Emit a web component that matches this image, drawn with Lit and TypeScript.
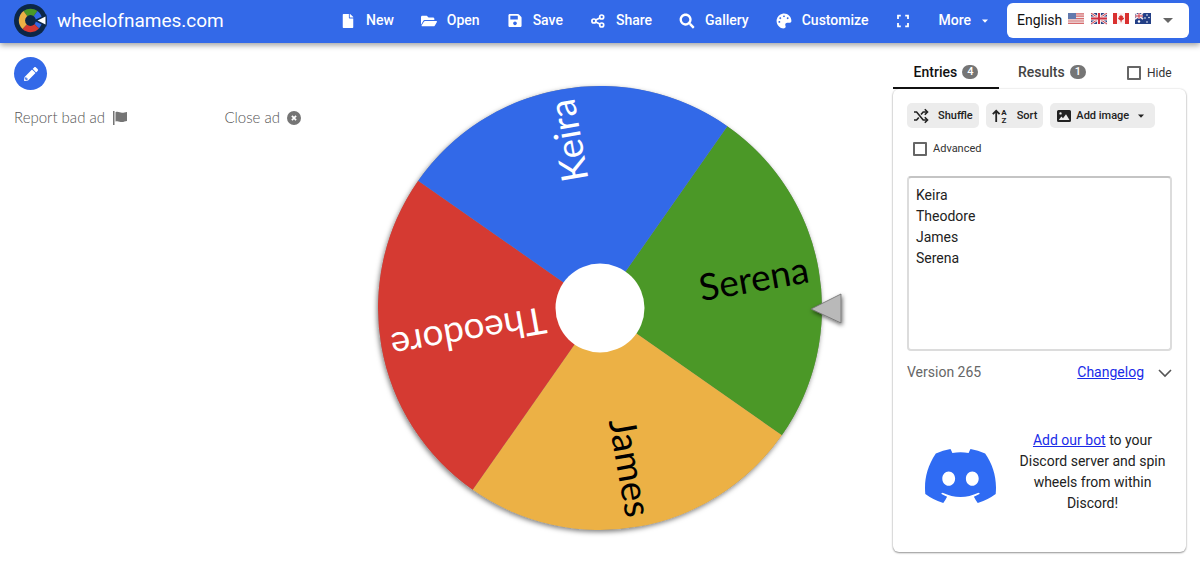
import { LitElement, html, svg, css } from "lit";
import { customElement, state } from "lit/decorators.js";

const FILE = "M224 136V0H24C10.7 0 0 10.7 0 24v464c0 13.3 10.7 24 24 24h336c13.3 0 24-10.7 24-24V160H248c-13.2 0-24-10.8-24-24zm160-14.1v6.1H256V0h6.1c6.4 0 12.5 2.5 17 7l97.9 98c4.5 4.5 7 10.6 7 16.9z";
const FOLDER = "M572.694 292.093L500.27 416.248A63.997 63.997 0 0 1 444.989 448H45.025c-18.523 0-30.064-20.093-20.731-36.093l72.424-124.155A64 64 0 0 1 152 256h399.964c18.523 0 30.064 20.093 20.73 36.093zM152 224h328v-48c0-26.51-21.49-48-48-48H272l-64-64H48C21.49 64 0 85.49 0 112v278.046l69.077-118.418C86.214 242.25 117.989 224 152 224z";
const SAVE = "M433.941 129.941l-83.882-83.882A48 48 0 0 0 316.118 32H48C21.49 32 0 53.49 0 80v352c0 26.51 21.49 48 48 48h352c26.51 0 48-21.49 48-48V163.882a48 48 0 0 0-14.059-33.941zM224 416c-35.346 0-64-28.654-64-64 0-35.346 28.654-64 64-64s64 28.654 64 64c0 35.346-28.654 64-64 64zm96-304.52V212c0 6.627-5.373 12-12 12H76c-6.627 0-12-5.373-12-12V108c0-6.627 5.373-12 12-12h228.52c3.183 0 6.235 1.264 8.485 3.515l3.48 3.48A11.996 11.996 0 0 1 320 111.48z";
const SEARCH = "M505 442.7L405.3 343c-4.5-4.5-10.6-7-17-7H372c27.6-35.3 44-79.7 44-128C416 93.1 322.9 0 208 0S0 93.1 0 208s93.1 208 208 208c48.3 0 92.7-16.4 128-44v16.3c0 6.4 2.5 12.5 7 17l99.7 99.7c9.4 9.4 24.6 9.4 33.9 0l28.3-28.3c9.4-9.4 9.4-24.6.1-34zM208 336c-70.7 0-128-57.2-128-128 0-70.7 57.2-128 128-128 70.7 0 128 57.2 128 128 0 70.7-57.2 128-128 128z";
const PALETTE = "M204.3 5C104.9 24.4 24.8 104.3 5.2 203.4c-37 187 131.7 326.4 258.8 306.7 41.2-6.4 61.4-54.6 42.5-91.7-23.1-45.4 9.9-98.4 60.9-98.4h79.7c35.8 0 64.8-29.6 64.9-65.3C511.5 97.1 368.1-26.9 204.3 5zM96 320c-17.7 0-32-14.3-32-32s14.3-32 32-32 32 14.3 32 32-14.3 32-32 32zm32-128c-17.7 0-32-14.3-32-32s14.3-32 32-32 32 14.3 32 32-14.3 32-32 32zm128-64c-17.7 0-32-14.3-32-32s14.3-32 32-32 32 14.3 32 32-14.3 32-32 32zm128 64c-17.7 0-32-14.3-32-32s14.3-32 32-32 32 14.3 32 32-14.3 32-32 32z";
const PENCIL = "M497.9 142.1l-46.1 46.1c-4.7 4.7-12.3 4.7-17 0l-111-111c-4.7-4.7-4.7-12.3 0-17l46.1-46.1c18.7-18.7 49.1-18.7 67.9 0l60.1 60.1c18.8 18.7 18.8 49.1 0 67.9zM284.2 99.8L21.6 362.4.4 483.9c-2.9 16.4 11.4 30.6 27.8 27.8l121.5-21.3 262.6-262.6c4.7-4.7 4.7-12.3 0-17l-111-111c-4.8-4.7-12.4-4.7-17.1 0zM88 424h48v36.3l-64.5 11.3-31.1-31.1L51.7 376H88v48z";
const DISCORD = "M107.7,8.07A105.15,105.15,0,0,0,81.47,0a72.06,72.06,0,0,0-3.36,6.83A97.68,97.68,0,0,0,49,6.83,72.37,72.37,0,0,0,45.64,0,105.89,105.89,0,0,0,19.39,8.09C2.79,32.65-1.71,56.6.54,80.21h0A105.73,105.73,0,0,0,32.71,96.36,77.7,77.7,0,0,0,39.6,85.25a68.42,68.42,0,0,1-10.85-5.18c.91-.66,1.8-1.34,2.66-2a75.57,75.57,0,0,0,64.32,0c.87.71,1.76,1.39,2.66,2a68.68,68.68,0,0,1-10.87,5.19,77,77,0,0,0,6.89,11.1A105.25,105.25,0,0,0,126.6,80.22h0C129.24,52.84,122.09,29.11,107.7,8.07ZM42.45,65.69C36.18,65.69,31,60,31,53s5-12.74,11.43-12.74S54,46,53.89,53,48.84,65.69,42.45,65.69Zm42.24,0C78.41,65.69,73.25,60,73.25,53s5-12.74,11.44-12.74S96.23,46,96.12,53,91.08,65.69,84.69,65.69Z";

const icon = (viewBox: string, body: unknown, size = 16, height = size) =>
  html`<svg class="icon" width=${size} height=${height} viewBox=${viewBox} fill="currentColor" aria-hidden="true">${body}</svg>`;

const shareIcon = icon("0 0 16 16", svg`
  <g fill="none" stroke="currentColor" stroke-width="1.7">
    <path d="M5.8 7L9.8 4.9M5.8 9L9.8 11.1" />
    <circle cx="3.9" cy="8" r="2" /><circle cx="11.700" cy="4" r="2" /><circle cx="11.700" cy="12" r="2" />
  </g>`);

const fullscreenIcon = icon("0 0 16 16", svg`
  <path fill="none" stroke="currentColor" stroke-width="1.8" d="M3 6V2.700H5.800M10.200 2.700H13V6M13 10V13.300H10.200M5.800 13.300H3V10" />`);

const shuffleIcon = icon("0 0 16 16", svg`
  <g fill="none" stroke="currentColor" stroke-width="1.6">
    <path d="M1 4h2.600l6.600 8H14M1 12h2.600l2.200-2.600M8 6.600L10.200 4H14" />
    <path d="M11.800 1.300L14.500 4l-2.700 2.700M11.800 9.300l2.700 2.700-2.700 2.700" />
  </g>`);

const sortIcon = icon("0 0 16 16", svg`
  <path fill="none" stroke="currentColor" stroke-width="1.8" d="M4.200 14V3M.8 6.200l3.400-3.400 3.400 3.400" />
  <text class="glyph" x="12" y="7.400">A</text><text class="glyph" x="12" y="14.500">Z</text>`);

const imageIcon = icon("0 0 16 16", svg`
  <path fill-rule="evenodd" d="M2.500 2h11A1.500 1.500 0 0 1 15 3.500v9a1.500 1.500 0 0 1-1.500 1.500h-11A1.500 1.500 0 0 1 1 12.500v-9A1.500 1.500 0 0 1 2.500 2zM2.800 12h10.700L10 6.200l-3 4-1.600-1.700zM4.500 4.200a1.200 1.200 0 1 0 0 2.400 1.200 1.200 0 0 0 0-2.400z" />`);

const caret = icon("0 0 8 4", svg`<path d="M1 0.500h6L4 3.700z" />`, 8, 4);

const MENU = [
  { label: "New", glyph: icon("0 0 384 512", svg`<path d=${FILE} />`, 16, 14) },
  { label: "Open", glyph: icon("0 0 576 512", svg`<path d=${FOLDER} />`) },
  { label: "Save", glyph: icon("0 0 448 512", svg`<path d=${SAVE} />`, 16, 15) },
  { label: "Share", glyph: shareIcon },
  { label: "Gallery", glyph: icon("-20 -20 552 552", svg`<path d=${SEARCH} />`) },
  { label: "Customize", glyph: icon("-20 -20 552 552", svg`<path d=${PALETTE} />`) },
];

const SLICES = [
  { name: "Serena", fill: "#4b9827", ink: "#000" },
  { name: "James", fill: "#ecb145", ink: "#000" },
  { name: "Theodore", fill: "#d53a32", ink: "#fff" },
  { name: "Keira", fill: "#3269e8", ink: "#fff" },
];

@customElement("name-wheel")
class NameWheel extends LitElement {
  static styles = css`
    :host { display: block; }
    .canvas { display: block; width: 100%; height: auto; }
    .name { font: 400 37px Lato, "Noto Sans", sans-serif; text-anchor: end; }
  `;

  render() {
    const radius = 222;
    const point = (deg: number) => {
      const a = (deg * Math.PI) / 180;
      return `${(radius * Math.cos(a)).toFixed(2)} ${(radius * Math.sin(a)).toFixed(2)}`;
    };
    return html`
      <svg class="canvas" viewBox="-250 -236 500 480" role="img" aria-label="Wheel of names">
        <defs>
          <filter id="rim" x="-10%" y="-10%" width="120%" height="120%">
            <feDropShadow dx="-1" dy="2" stdDeviation="2.500" flood-opacity="0.500" />
          </filter>
          <filter id="tip" x="-40%" y="-40%" width="180%" height="180%">
            <feDropShadow dx="1" dy="2" stdDeviation="2" flood-opacity="0.600" />
          </filter>
        </defs>
        <circle r=${radius} fill="#8f8f8f" filter="url(#rim)" />
        ${SLICES.map((s, i) => {
          const mid = i * 90 - 10;
          return svg`
            <path d="M0 0L${point(mid - 45)}A${radius} ${radius} 0 0 1 ${point(mid + 45)}Z" fill=${s.fill} />
            <text class="name" x="212" y="11" fill=${s.ink} transform="rotate(${mid})">${s.name}</text>`;
        })}
        <circle r="44.500" fill="#fff" />
        <path d="M211 1L241 -14V15Z" fill="#b9b9b9" stroke="#6d6d6d" stroke-width="0.800" filter="url(#tip)" />
      </svg>`;
  }
}

@customElement("app-root")
class AppRoot extends LitElement {
  @state() private names = ["Keira", "Theodore", "James", "Serena"];

  static styles = css`
    :host {
      display: block;
      min-height: 100vh;
      background: #fff;
      color: #222;
      font: 400 14px/21px Roboto, "Liberation Sans", sans-serif;
    }
    * { box-sizing: border-box; }
    button { font: inherit; color: inherit; background: none; border: 0; padding: 0; cursor: pointer; }
    .icon { display: block; flex: none; }
    .glyph { font: 700 8px Roboto, sans-serif; text-anchor: middle; }

    .bar {
      display: flex;
      align-items: center;
      justify-content: space-between;
      height: 43px;
      padding: 0 11px 2px 14px;
      background: #3369e8;
      color: #fff;
      box-shadow: 0 2px 6px rgba(0, 0, 0, 0.4);
    }
    .brand { display: flex; align-items: center; gap: 10px; color: inherit; text-decoration: none; font-size: 19px; }
    .menu { display: flex; align-items: center; gap: 27px; font-weight: 500; }
    .item { display: flex; align-items: center; gap: 10px; }
    .end { display: flex; align-items: center; gap: 18px; }
    .lang {
      display: grid;
      grid-template-columns: 51px 1fr auto;
      align-items: center;
      width: 182px;
      height: 35px;
      padding: 0 16px 0 10px;
      border-radius: 6px;
      background: #fff;
      color: #111;
    }
    .lang-select {
      grid-area: 1 / 1 / 2 / 4;
      appearance: none;
      width: 100%;
      height: 35px;
      border: 0;
      padding: 0;
      background: transparent;
      font: 400 14px/21px Roboto, sans-serif;
      color: inherit;
    }
    .flags { grid-area: 1 / 2; margin-bottom: 3px; pointer-events: none; }
    .lang-caret { grid-area: 1 / 3; color: #666; pointer-events: none; }

    .page {
      display: grid;
      grid-template-columns: 293px minmax(0, 1fr) 293px;
      padding: 14px 14px 0;
    }
    .round {
      display: grid;
      place-items: center;
      width: 33px;
      height: 33px;
      border-radius: 50%;
      background: #3369e8;
      color: #fff;
    }
    .ads {
      display: flex;
      justify-content: space-between;
      margin-top: 17px;
      padding-right: 6px;
      font: 300 15px/21px Lato, "Noto Sans", sans-serif;
      color: #555;
    }
    .ad { display: flex; align-items: center; gap: 7px; }
    .ad .icon { color: #757575; }
    .stage { display: flex; justify-content: center; padding-top: 15px; }
    .wheel { flex: 0 1 500px; min-width: 0; }

    .tabs { display: flex; height: 32px; align-items: stretch; }
    .tab {
      display: flex;
      align-items: center;
      justify-content: center;
      gap: 5px;
      width: 106px;
      border-bottom: 2px solid transparent;
      font-weight: 500;
      color: #444;
    }
    .tab.on { border-color: #111; color: #111; }
    .count {
      padding: 0 5px;
      border-radius: 7px;
      background: #757575;
      color: #fff;
      font-size: 11px;
      line-height: 14px;
    }
    .check { display: flex; align-items: center; gap: 6px; font-size: 12px; color: #333; }
    .box {
      appearance: none;
      width: 14px;
      height: 14px;
      margin: 0;
      border: 2px solid #666;
      border-radius: 1px;
      background: #fff;
    }
    .hide { margin-left: 22px; }

    .card {
      padding: 14px;
      border-radius: 6px;
      background: #fff;
      box-shadow: 0 1px 2px rgba(0, 0, 0, 0.4), 0 0 2px rgba(0, 0, 0, 0.15);
    }
    .tools { display: flex; gap: 7px; }
    .tool {
      display: flex;
      align-items: center;
      gap: 9px;
      height: 25px;
      padding: 0 6px;
      border-radius: 5px;
      background: #ececec;
      font-size: 11px;
      font-weight: 500;
      color: #222;
    }
    .tool.image { gap: 4px; }
    .tool.image .icon:last-child { margin: 0 4px; }
    .advanced { margin: 10px 0 17px 6px; font-size: 11px; }
    .names {
      display: block;
      width: 100%;
      height: 175px;
      padding: 7px;
      border: 2px solid #dcdcdc;
      border-top-color: #c4c4c4;
      border-radius: 4px;
      outline: 0;
      resize: none;
      font: 400 14px/21px Roboto, sans-serif;
      color: #222;
    }
    .meta { display: flex; align-items: center; margin-top: 11px; color: #666; }
    .link { color: #1a2be8; text-decoration: underline; }
    .meta .link { margin-left: auto; }
    .meta button { margin-left: 14px; }
    .promo { display: grid; grid-template-columns: 106px 1fr; align-items: center; margin: 47px 0 24px; }
    .promo .icon { justify-self: center; margin-top: 8px; color: #2f6bf3; }
    .promo p { margin: 0; padding: 0 5px; text-align: center; }
  `;

  private onNames(e: Event) {
    this.names = (e.target as HTMLTextAreaElement).value.split("\n");
  }

  private logo() {
    return html`<svg class="icon" width="33" height="33" viewBox="-16.5 -16.5 33 33" aria-hidden="true">
      <circle r="16.500" fill="#0c2747" />
      <path d="M0 0L-7 -9.400A11.700 11.700 0 0 1 7 -9.400Z" fill="#4b9827" />
      <path d="M0 0L7 -9.400A11.700 11.700 0 0 1 8.500 8Z" fill="#3369e8" />
      <path d="M0 0L8.500 8A11.700 11.700 0 0 1 -8 8.500Z" fill="#d53a32" />
      <path d="M0 0L-8 8.500A11.700 11.700 0 0 1 -7 -9.400Z" fill="#ecb145" />
      <path d="M3 0L16 -6V6Z" fill="#0c2747" />
      <circle r="5.400" fill="#0c2747" />
      <path d="M7 0L15 -4V4Z" fill="#fff" />
    </svg>`;
  }

  private flags() {
    return html`<svg class="flags" width="84" height="12" viewBox="0 0 84 12" aria-hidden="true">
      <g>
        <rect width="16" height="11" fill="#f1e6e6" />
        <path d="M0 .8H16M0 3.200H16M0 5.600H16M0 8H16M0 10.300H16" stroke="#d66a6c" stroke-width="1.200" />
        <rect width="8" height="6" fill="#6279ad" />
      </g>
      <g transform="translate(23)">
        <rect width="16" height="11" fill="#2b4585" />
        <path d="M0 0L16 11M16 0L0 11" stroke="#f2e9ec" stroke-width="2.600" />
        <path d="M0 0L16 11M16 0L0 11" stroke="#cf3d4a" stroke-width="1" />
        <path d="M8 0V11M0 5.500H16" stroke="#f2e9ec" stroke-width="4" />
        <path d="M8 0V11M0 5.500H16" stroke="#cf3040" stroke-width="2" />
      </g>
      <g transform="translate(45)">
        <rect width="16" height="11" fill="#fbf2f2" />
        <path d="M0 0H4V11H0ZM12 0H16V11H12Z" fill="#d9302f" />
        <path d="M8 1.500l1 1.700 1-.4-.2 2.200 1.400-.6-.4 1.700-2.300 1.600.1 1.500h-1l.1-1.500-2.300-1.600L5 4.400l1.300.6L6 2.800l1 .4z" fill="#d9302f" />
      </g>
      <g transform="translate(67)">
        <rect width="16" height="11" fill="#233f86" />
        <path d="M0 0L8 6M8 0L0 6M4 0V6M0 3H8" stroke="#f0e6ea" stroke-width="1.600" />
        <path d="M4 0V6M0 3H8" stroke="#cf3040" stroke-width=".9" />
        <g fill="#fff"><circle cx="4" cy="8.500" r="1.200" /><circle cx="12" cy="2" r=".8" /><circle cx="12" cy="9" r=".8" /><circle cx="10" cy="5" r=".8" /><circle cx="14" cy="4.500" r=".8" /></g>
      </g>
    </svg>`;
  }

  render() {
    return html`
      <header class="bar">
        <a class="brand" href="#">${this.logo()}<span>wheelofnames.com</span></a>
        <div class="end">
          <nav class="menu" aria-label="Main">
            ${MENU.map((m) => html`<button class="item" type="button">${m.glyph}<span>${m.label}</span></button>`)}
            <button class="item" type="button" aria-label="Fullscreen">${fullscreenIcon}</button>
            <button class="item" type="button"><span>More</span>${caret}</button>
          </nav>
          <div class="lang">
            <select class="lang-select" aria-label="Language"><option>English</option></select>
            ${this.flags()}
            <svg class="lang-caret" width="10" height="5" viewBox="0 0 10 5" aria-hidden="true"><path d="M0 0H10L5 5Z" fill="currentColor" /></svg>
          </div>
        </div>
      </header>
      <main class="page">
        <section>
          <button class="round" type="button" aria-label="Edit title">${icon("0 0 512 512", svg`<path d=${PENCIL} />`, 14)}</button>
          <div class="ads">
            <button class="ad" type="button">Report bad ad
              ${icon("0 0 16 16", svg`<path d="M1 1h1.500v14H1zM3.500 2.200c2.500-1.200 4.500.6 6.500.6 1.800 0 3-.8 5-.9v9.200c-2 .3-3.200 1-5 1-2.300 0-4-1.600-6.500-.6z" />`)}
            </button>
            <button class="ad" type="button">Close ad
              ${icon("0 0 14 14", svg`<circle cx="7" cy="7" r="7" /><path d="M4.900 4.900l4.200 4.200M9.100 4.900L4.900 9.100" stroke="#fff" stroke-width="1.700" />`, 14)}
            </button>
          </div>
        </section>
        <section class="stage"><name-wheel class="wheel"></name-wheel></section>
        <aside>
          <div class="tabs">
            <button class="tab on" type="button">Entries <span class="count">${this.names.length}</span></button>
            <button class="tab" type="button">Results <span class="count">1</span></button>
            <label class="check hide"><input class="box" type="checkbox" />Hide</label>
          </div>
          <div class="card">
            <div class="tools">
              <button class="tool" type="button">${shuffleIcon}<span>Shuffle</span></button>
              <button class="tool" type="button">${sortIcon}<span>Sort</span></button>
              <button class="tool image" type="button">${imageIcon}<span>Add image</span>${caret}</button>
            </div>
            <label class="check advanced"><input class="box" type="checkbox" />Advanced</label>
            <textarea class="names" aria-label="Entries" spellcheck="false" .value=${this.names.join("\n")} @input=${this.onNames}></textarea>
            <div class="meta">
              <span>Version 265</span>
              <a class="link" href="#">Changelog</a>
              <button type="button" aria-label="Expand">${icon("0 0 14 14", svg`<path d="M1 4l6 6 6-6" fill="none" stroke="#555" stroke-width="1.600" />`, 14)}</button>
            </div>
            <div class="promo">
              ${icon("0 0 127.14 96.36", svg`<path d=${DISCORD} />`, 71, 54)}
              <p><a class="link" href="#">Add our bot</a> to your Discord server and spin wheels from within Discord!</p>
            </div>
          </div>
        </aside>
      </main>`;
  }
}
